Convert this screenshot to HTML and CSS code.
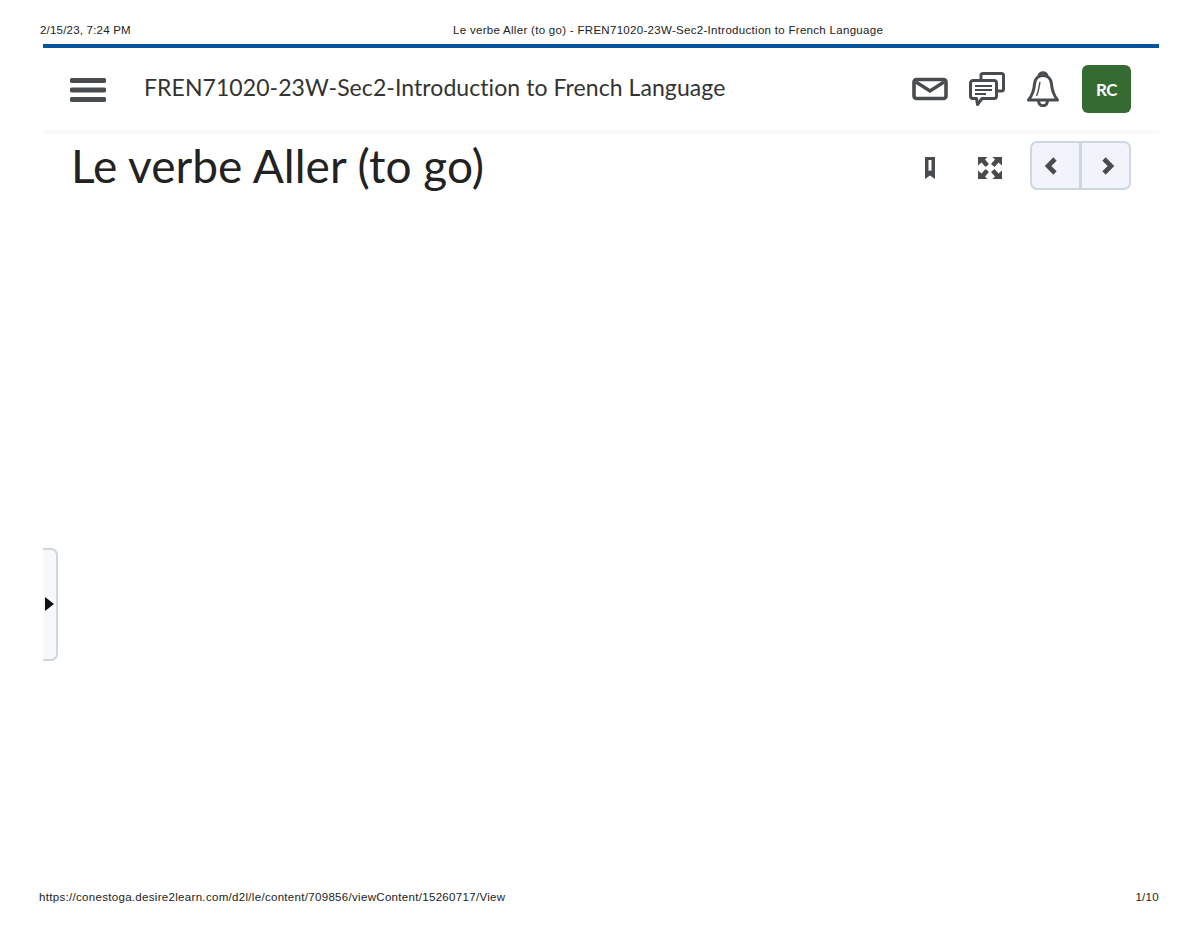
FILE: index.html
```html
<!DOCTYPE html>
<html lang="en">
<head>
<meta charset="utf-8">
<title>Le verbe Aller (to go) - FREN71020-23W-Sec2-Introduction to French Language</title>
<link rel="stylesheet" href="styles.css">
</head>
<body>
<div class="sheet">
  <header class="print-head">
    <span>2/15/23, 7:24 PM</span>
    <span class="print-title">Le verbe Aller (to go) - FREN71020-23W-Sec2-Introduction to French Language</span>
  </header>
  <main class="app">
    <div class="nav">
      <svg class="burger" width="36" height="24" viewBox="0 0 36 24"><path d="M2 2.500h32M2 12h32M2 21.500h32" fill="none" stroke="#494c4e" stroke-width="4.800" stroke-linecap="round"/></svg>
      <div class="course">FREN71020-23W-Sec2-Introduction to French Language</div>
      <div class="nav-icons">
        <svg class="i-mail" width="36" height="24" viewBox="0 0 36 24"><rect x="2" y="2.500" width="32" height="19" rx="2.500" fill="none" stroke="#494c4e" stroke-width="3.600"/><path d="M4 5l14 9 14-9" fill="none" stroke="#494c4e" stroke-width="3.400"/></svg>
        <svg class="i-chat" width="36" height="36" viewBox="0 0 36 36"><path d="M12 7V3.500a2 2 0 0 1 2-2h18.500a2 2 0 0 1 2 2V17a2 2 0 0 1-2 2H29" fill="none" stroke="#494c4e" stroke-width="3"/><path d="M4 8.500h21a2.500 2.500 0 0 1 2.500 2.500v13a2.500 2.500 0 0 1-2.500 2.500H13l-4.500 6-1-6H4A2.500 2.500 0 0 1 1.500 24V11A2.500 2.500 0 0 1 4 8.500z" fill="#fff" stroke="#494c4e" stroke-width="3" stroke-linejoin="round"/><path d="M6 14h17M6 18h17M6 22h11" fill="none" stroke="#494c4e" stroke-width="2"/></svg>
        <svg class="i-bell" width="32" height="36" viewBox="0 0 32 36"><path d="M16 4.500c-5 0-8 3.500-8.500 8.500-.5 6.500-1.500 10.500-6 16h29c-4.500-5.500-5.500-9.500-6-16-.5-5-3.500-8.500-8.500-8.500z" fill="none" stroke="#494c4e" stroke-width="3" stroke-linejoin="round"/><path d="M12 5C12 .8 20 .8 20 5M11.500 29.500c.5 7 8.500 7 9 0" fill="none" stroke="#494c4e" stroke-width="3"/><path d="M13 11c-1 5-1.500 10-3.500 14" fill="none" stroke="#494c4e" stroke-width="1.400"/></svg>
        <div class="avatar">RC</div>
      </div>
    </div>
    <div class="title-row">
      <h1>Le verbe Aller (to go)</h1>
      <svg class="i-bookmark" width="12" height="22" viewBox="0 0 12 22"><path d="M1 0h10v22l-5-3.500L1 22z M4.500 3v11l1.500-.8 1.500.8V3z" fill="#494c4e" fill-rule="evenodd"/></svg>
      <svg class="i-full" width="24" height="22" viewBox="0 0 24 22"><path d="M0 0h9.500L7 2.500l4 4.500-3.500 3L3.500 5.500 0 8.500zM24 0h-9.500L17 2.500 13 7l3.500 3 4-4.500L24 8.500zM0 22h9.500L7 19.500l4-4.500-3.500-3-4 4.500L0 13.500zM24 22h-9.500l2.500-2.500L13 15l3.500-3 4 4.500 3.500-3z" fill="#494c4e"/></svg>
      <div class="pager">
        <div class="pager-btn"><svg class="chev-l" width="14" height="18" viewBox="0 0 14 18"><path d="M11 2L4 9l7 7" fill="none" stroke="#494c4e" stroke-width="4.600"/></svg></div>
        <div class="pager-btn"><svg class="chev-r" width="14" height="18" viewBox="0 0 14 18"><path d="M3 2l7 7-7 7" fill="none" stroke="#494c4e" stroke-width="4.600"/></svg></div>
      </div>
    </div>
    <div class="side-tab"><svg width="9" height="14" viewBox="0 0 9 14"><path d="M0 0l9 7-9 7z" fill="#111"/></svg></div>
  </main>
  <footer class="print-foot">
    <span>https://conestoga.desire2learn.com/d2l/le/content/709856/viewContent/15260717/View</span>
    <span>1/10</span>
  </footer>
</div>
</body>
</html>
```
FILE: styles.css
```css
* { box-sizing: border-box; }
html, body { margin: 0; padding: 0; background: #fff; }
.sheet {
  height: 927px;
  display: flex;
  flex-direction: column;
  padding: 0 41px 0 40px;
  overflow: hidden;
  font-family: "Liberation Sans", Arial, sans-serif;
}
.print-head, .print-foot {
  position: relative;
  display: flex;
  justify-content: space-between;
  font-size: 11.500px;
  line-height: 14px;
  color: #222;
}
.print-head { padding-top: 23px; height: 44px; letter-spacing: 0.2px; }
.print-title { position: absolute; left: 413px; top: 23px; letter-spacing: 0.3px; }
.app {
  position: relative;
  flex: 1;
  margin-left: 3px;
  border-top: 4px solid #04549b;
  font-family: Lato, sans-serif;
}
.nav {
  height: 86px;
  display: flex;
  align-items: center;
  padding: 0 28px 0 27px;
  border-bottom: 4px solid #f9fafb;
}
.burger { margin-top: 2px; }
.course {
  margin-left: 38px;
  font-size: 23px;
  color: #333;
  letter-spacing: 0.07px;
  margin-top: -4px;
}
.nav-icons { margin-left: auto; display: flex; align-items: center; }
.i-mail { margin-right: 2px; }
.i-chat { margin-left: 19px; margin-top: 2px; }
.i-bell { margin-left: 22px; margin-top: -1px; }
.avatar {
  width: 49px;
  height: 48px;
  margin-left: 23px;
  border-radius: 6px;
  background: #356a32;
  color: #fff;
  font-size: 17px;
  font-weight: 700;
  letter-spacing: -0.5px;
  display: flex;
  align-items: center;
  justify-content: center;
}
.title-row {
  display: flex;
  align-items: center;
  height: 60px;
  padding: 4px 28px 0 28px;
}
h1 {
  margin: -1px auto 0 0;
  font-size: 46px;
  font-weight: 400;
  color: #222;
  line-height: 56px;
  letter-spacing: 0.04px;
}
.i-bookmark { margin-top: 3px; }
.i-full { margin-left: 42px; margin-top: 3px; }
.pager {
  margin-left: 28px;
  margin-top: -1px;
  width: 101px;
  height: 49px;
  display: flex;
  border: 2.500px solid #cdd7e0;
  border-radius: 7px;
  background: #f1f5fb;
}
.pager-btn {
  flex: 1;
  display: flex;
  align-items: center;
  justify-content: center;
}
.pager-btn + .pager-btn { border-left: 3px solid #cdd7e0; }
.chev-l { margin-right: 9px; }
.chev-r { margin-left: 4px; }
.side-tab {
  position: absolute;
  left: 0;
  top: 500px;
  width: 15px;
  height: 113px;
  display: flex;
  align-items: center;
  justify-content: center;
  padding: 0 1px 2px 0;
  background: #f8f8f9;
  border: 2px solid #cdd7e0;
  border-left: none;
  border-radius: 0 7px 7px 0;
}
.print-foot { height: 37px; padding-top: 0; letter-spacing: 0.31px; margin-left: -1px; }
```
